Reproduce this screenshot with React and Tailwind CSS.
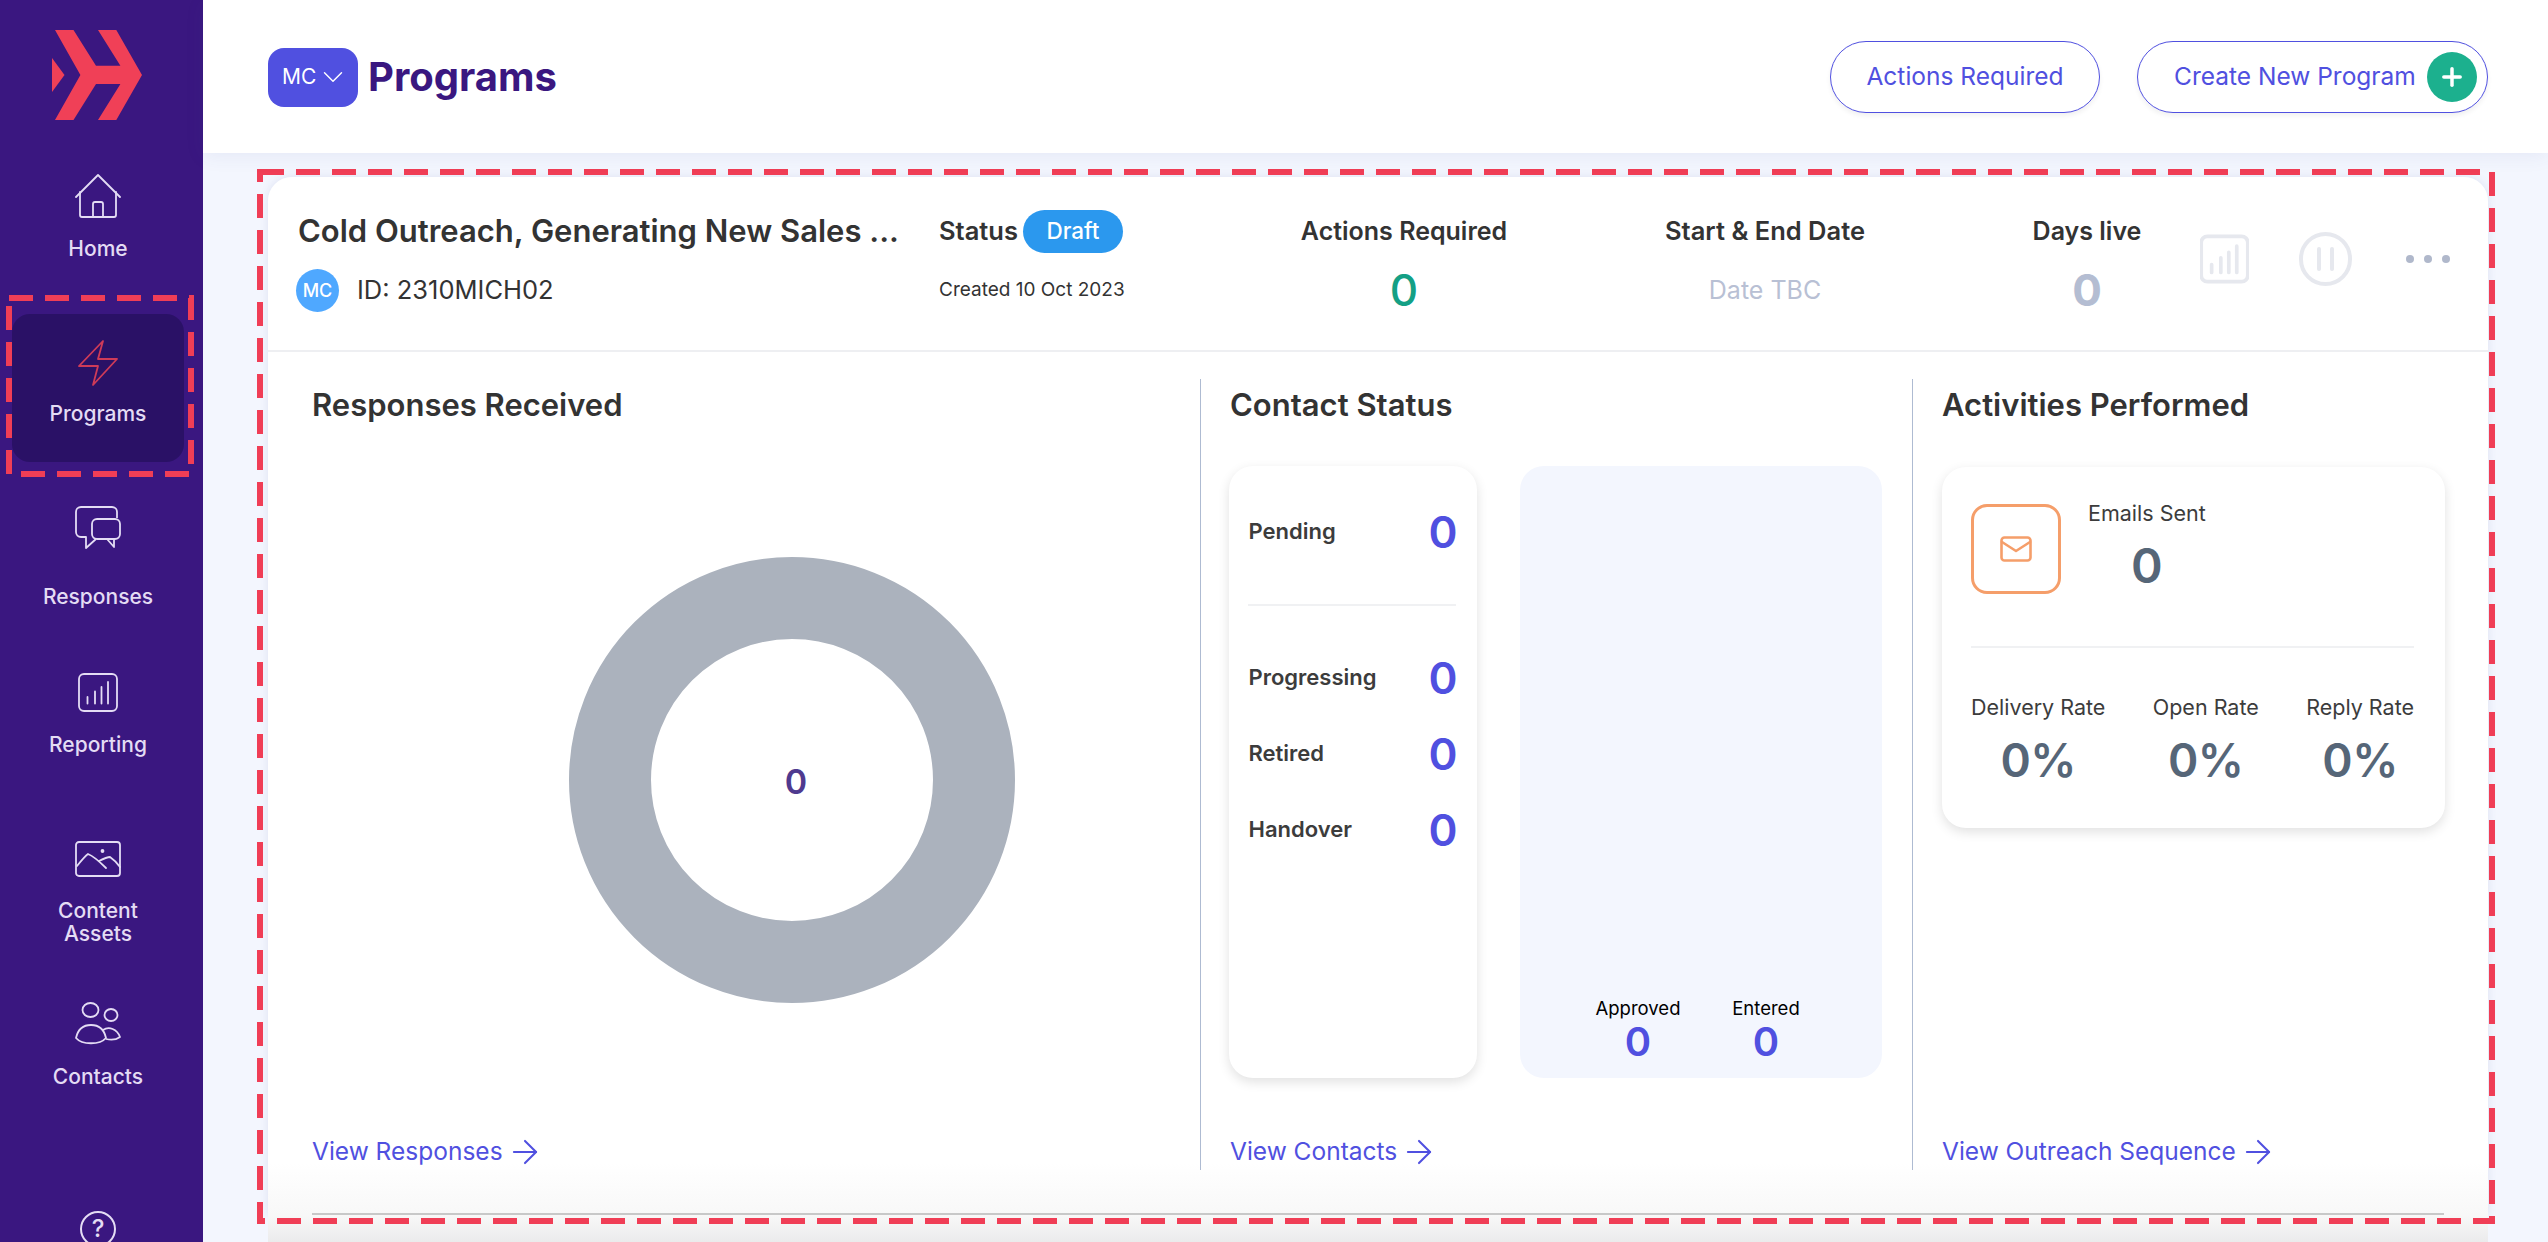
import React from 'react';
import { ArrowRight, ChevronDown, Plus } from 'lucide-react';

const HomeIcon = () => (
  <svg width="46" height="44" viewBox="0 0 46 44" fill="none" stroke="#e4dcf4" strokeWidth="1.8" strokeLinejoin="round" strokeLinecap="round">
    <path d="M1 23 L23 1 L45 23" />
    <path d="M5 18 V41 a2 2 0 0 0 2 2 H39 a2 2 0 0 0 2-2 V18" />
    <path d="M18 43 V30 a2 2 0 0 1 2-2 h6 a2 2 0 0 1 2 2 V43" />
  </svg>
);

const BoltIcon = () => (
  <svg width="40" height="46" viewBox="0 0 40 46" fill="none" stroke="#cf3b58" strokeWidth="1.8" strokeLinejoin="round">
    <path d="M25 1 L1 26 H20 L15 45 L39 19 H20 Z" />
  </svg>
);

const ChatIcon = () => (
  <svg width="46" height="44" viewBox="0 0 46 44" fill="none" stroke="#e4dcf4" strokeWidth="1.8" strokeLinejoin="round">
    <path d="M42 12 V6 a5 5 0 0 0-5-5 H6 a5 5 0 0 0-5 5 V26 a5 5 0 0 0 5 5 H11 V42 L21 33" />
    <rect x="17" y="13" width="28" height="20" rx="5" />
    <path d="M32 33 L39 41 V33" />
  </svg>
);

const ReportIcon = ({ color = '#e4dcf4', sw = 1.8 }) => (
  <svg width="100%" height="100%" viewBox="0 0 40 39" fill="none" stroke={color} strokeWidth={sw} strokeLinecap="round">
    <rect x="1" y="1" width="38" height="37" rx="5" />
    <path d="M9.5 30.5 V24 M17 30.5 V18.5 M23.5 30.5 V14 M30 30.5 V9" />
  </svg>
);

const ImageIcon = () => (
  <svg width="46" height="36" viewBox="0 0 46 36" fill="none" stroke="#e4dcf4" strokeWidth="1.8" strokeLinejoin="round" strokeLinecap="round">
    <rect x="1" y="1" width="44" height="34" rx="3" />
    <path d="M2 25 C6 20 10 15 13 13 C18 15 25 21 31 27" />
    <path d="M24 20 C28 18 32 16 35 16 C38 18 42 22 45 26" />
    <circle cx="27.5" cy="10" r="1" fill="#e4dcf4" />
  </svg>
);

const PeopleIcon = () => (
  <svg width="46" height="43" viewBox="0 0 46 43" fill="none" stroke="#e4dcf4" strokeWidth="1.8" strokeLinejoin="round">
    <ellipse cx="15.5" cy="8" rx="8" ry="7" />
    <ellipse cx="36" cy="13" rx="6.5" ry="6" />
    <path d="M1 36 C3 27 9 23 16 23 C23 23 29 27 31 36 C25 43 7 43 1 36 Z" />
    <path d="M28 28 C34 24 42 27 45 35 C41 38 35 38 31 37" />
  </svg>
);

const MailIcon = () => (
  <svg width="32" height="26" viewBox="0 0 32 26" fill="none" stroke="#f59e6a" strokeWidth="2.6" strokeLinejoin="round" strokeLinecap="round">
    <rect x="1.5" y="1.5" width="29" height="23" rx="3" />
    <path d="M2 6 L16 15 L30 6" />
  </svg>
);

const NavItem = ({ icon, label, className, labelClass }) => (
  <div className={`flex flex-col items-center ${className}`}>
    {icon}
    <span className={`text-center text-[21px] leading-[28px] font-medium text-[#e4dcf4] ${labelClass}`}>{label}</span>
  </div>
);

const Sidebar = () => (
  <aside className="relative flex h-full w-[203px] shrink-0 flex-col items-center overflow-hidden bg-[#3a1780] pr-[7px]">
    <svg className="mt-[30px] ml-[-2px] shrink-0" width="90" height="90" viewBox="0 0 90 90" fill="#f04057">
      <path d="M0 28 L12.5 45 L0 62 Z" />
      <path d="M3 0 H21.5 L44 35.7 H68.4 L46 0 H64.3 L90 45 L64.3 90 H46 L68.4 54 H44 L21.5 90 H3 L28.4 45 Z" />
    </svg>
    <NavItem className="mt-[54px]" labelClass="mt-[17px]" icon={<HomeIcon />} label="Home" />
    <div className="mt-[51px] flex h-[148px] w-[172px] shrink-0 flex-col items-center rounded-[18px] bg-[#2a1166] pt-[26px]">
      <BoltIcon />
      <span className="mt-[14px] text-[21px] leading-[28px] font-medium text-[#e4dcf4]">Programs</span>
    </div>
    <NavItem className="mt-[44px]" labelClass="mt-[33px]" icon={<ChatIcon />} label="Responses" />
    <NavItem
      className="mt-[62px]"
      labelClass="mt-[19px]"
      icon={
        <div className="h-[39px] w-[40px]">
          <ReportIcon />
        </div>
      }
      label="Reporting"
    />
    <NavItem
      className="mt-[82px]"
      labelClass="mt-[22px] !leading-[23px]"
      icon={<ImageIcon />}
      label={
        <>
          Content
          <br />
          Assets
        </>
      }
    />
    <NavItem className="mt-[57px]" labelClass="mt-[18px]" icon={<PeopleIcon />} label="Contacts" />
    <div className="mt-[120px] flex h-[36px] w-[36px] shrink-0 items-center justify-center rounded-full border-2 border-[#e4dcf4] text-[24px] font-medium text-[#e4dcf4]">
      ?
    </div>
  </aside>
);

const Header = () => (
  <header className="relative z-10 flex h-[153px] shrink-0 items-center justify-between bg-white pr-[60px] pl-[65px] shadow-[0_3px_18px_rgba(70,80,150,0.08)]">
    <div className="flex items-center">
      <button className="mt-[1px] flex h-[59px] w-[90px] items-center rounded-[16px] bg-[#5050e0] pl-[14px] text-[21px] font-normal text-white">
        MC
        <ChevronDown className="h-[34px] w-[34px]" strokeWidth={1} />
      </button>
      <h1 className="ml-[10px] text-[40px] leading-none font-bold text-[#3a1780]">Programs</h1>
    </div>
    <div className="flex items-center gap-[37px]">
      <button className="flex h-[72px] w-[270px] items-center justify-center rounded-full border-[1.5px] border-[#5050e0] text-[24.5px] font-normal text-[#5050e0] shadow-[0_3px_5px_rgba(0,0,0,0.06)]">
        Actions Required
      </button>
      <button className="flex h-[72px] w-[351px] items-center justify-between rounded-full border-[1.5px] border-[#5050e0] pr-[10px] pl-[36px] text-[24.5px] font-normal text-[#5050e0] shadow-[0_3px_5px_rgba(0,0,0,0.06)]">
        Create New Program
        <span className="flex h-[50px] w-[50px] items-center justify-center rounded-full bg-[#1cb08e]">
          <Plus className="h-[28px] w-[28px] text-white" strokeWidth={3} />
        </span>
      </button>
    </div>
  </header>
);

const ProgramHeader = () => (
  <div className="flex h-[175px] shrink-0 border-b-2 border-[#eeeff2] pt-[34px] pl-[30px] text-[#333333]">
    <div className="w-[641px] shrink-0">
      <div className="flex h-[40px] items-center text-[31px] font-semibold whitespace-nowrap">Cold Outreach, Generating New Sales ...</div>
      <div className="mt-[17px] flex h-[44px] items-center">
        <span className="-ml-[2px] flex h-[43px] w-[43px] items-center justify-center rounded-full bg-[#4fa8ff] text-[18px] font-medium text-white">
          MC
        </span>
        <span className="ml-[18px] text-[25.5px]">ID: 2310MICH02</span>
      </div>
    </div>
    <div className="w-[185px] shrink-0">
      <div className="flex h-[40px] items-center text-[25.5px] font-semibold">
        Status
        <span className="ml-[5px] flex h-[43px] w-[100px] shrink-0 items-center justify-center rounded-full bg-[#2b98ee] text-[22.5px] font-medium text-white">
          Draft
        </span>
      </div>
      <div className="mt-[17px] flex h-[44px] items-center text-[19px] whitespace-nowrap">Created 10 Oct 2023</div>
    </div>
    <div className="ml-[80px] w-[400px] shrink-0 text-center">
      <div className="h-[40px] text-[25px] leading-[40px] font-semibold">Actions Required</div>
      <div className="mt-[17px] h-[44px] text-[44px] leading-[44px] font-medium text-[#14a085]">0</div>
    </div>
    <div className="ml-[41px] w-[240px] shrink-0 text-center">
      <div className="h-[40px] text-[25.5px] leading-[40px] font-semibold whitespace-nowrap">Start &amp; End Date</div>
      <div className="mt-[17px] h-[44px] text-[25px] leading-[44px] text-[#b8c0d4]">Date TBC</div>
    </div>
    <div className="ml-[102px] w-[200px] shrink-0 text-center">
      <div className="h-[40px] text-[25px] leading-[40px] font-semibold">Days live</div>
      <div className="mt-[17px] h-[44px] text-[44px] leading-[44px] font-bold text-[#b4bdd2]">0</div>
    </div>
    <div className="mt-[23px] ml-[13px] h-[50px] w-[49px] shrink-0">
      <ReportIcon color="#e6e8ee" sw={3} />
    </div>
    <span className="mt-[21px] ml-[50px] flex h-[54px] w-[53px] shrink-0 items-center justify-center gap-[9px] rounded-full border-[4px] border-[#e6e8ee]">
      <span className="h-[24px] w-[4px] rounded-full bg-[#e6e8ee]" />
      <span className="h-[24px] w-[4px] rounded-full bg-[#e6e8ee]" />
    </span>
    <span className="mt-[44px] ml-[54px] flex h-[8px] items-center gap-[10px]">
      <span className="h-[8px] w-[8px] rounded-full bg-[#b0b8cb]" />
      <span className="h-[8px] w-[8px] rounded-full bg-[#b0b8cb]" />
      <span className="h-[8px] w-[8px] rounded-full bg-[#b0b8cb]" />
    </span>
  </div>
);

const SectionTitle = ({ children }) => (
  <h2 className="flex h-[52px] shrink-0 items-center text-[31px] font-semibold whitespace-nowrap text-[#333333]">{children}</h2>
);

const ViewLink = ({ children }) => (
  <a className="mt-auto flex h-[37px] items-center gap-[3px] text-[24.5px] text-[#5050e0]">
    {children}
    <ArrowRight className="h-[38px] w-[38px] shrink-0" strokeWidth={1.3} />
  </a>
);

const StatusRow = ({ label, className }) => (
  <div className={`flex h-[44px] items-center justify-between pr-[19px] pl-[20px] ${className}`}>
    <span className="text-[22px] font-semibold text-[#3c3c3c]">{label}</span>
    <span className="pt-[2px] text-[44px] leading-[44px] font-semibold text-[#5050e0]">0</span>
  </div>
);

const ResponsesCol = () => (
  <section className="flex h-full w-[932px] shrink-0 flex-col pl-[44px]">
    <SectionTitle>Responses Received</SectionTitle>
    <div className="relative mt-[126px] ml-[257px] h-[446px] w-[446px]">
      <svg width="446" height="446" viewBox="0 0 446 446" fill="none">
        <circle cx="223" cy="223" r="182" stroke="#abb2bd" strokeWidth="82" />
      </svg>
      <span className="absolute inset-0 flex items-center justify-center pt-[2px] pl-[8px] text-[34px] font-semibold text-[#4f3a8f]">0</span>
    </div>
    <ViewLink>View Responses</ViewLink>
  </section>
);

const ContactCol = () => (
  <section className="flex h-full w-[712px] shrink-0 flex-col border-l-[1.5px] border-[#aebbd2] pl-[29px]">
    <SectionTitle>Contact Status</SectionTitle>
    <div className="mt-[35px] -ml-[1.5px] flex">
      <div className="h-[612px] w-[248px] shrink-0 rounded-[24px] bg-white pt-[43px] shadow-[0_4px_12px_rgba(0,0,0,0.12)]">
        <StatusRow label="Pending" />
        <div className="mt-[51px] mr-[21px] ml-[19px] border-t-2 border-[#f0f1f3]" />
        <StatusRow label="Progressing" className="mt-[49px]" />
        <StatusRow label="Retired" className="mt-[32px]" />
        <StatusRow label="Handover" className="mt-[32px]" />
      </div>
      <div className="ml-[43px] flex h-[612px] w-[362px] shrink-0 items-end justify-center rounded-[24px] bg-[#f3f6fe] pb-[14px] pl-[3px]">
        <div className="w-[128px] text-center">
          <div className="text-[18.5px] leading-[24px] text-black">Approved</div>
          <div className="text-[40px] leading-[44px] font-semibold text-[#5050e0]">0</div>
        </div>
        <div className="w-[128px] text-center">
          <div className="text-[18.5px] leading-[24px] text-black">Entered</div>
          <div className="text-[40px] leading-[44px] font-semibold text-[#5050e0]">0</div>
        </div>
      </div>
    </div>
    <ViewLink>View Contacts</ViewLink>
  </section>
);

const RateStat = ({ label }) => (
  <div className="flex flex-col items-center">
    <span className="text-[21.5px] leading-[28px] text-[#3c3c3c]">{label}</span>
    <span className="mt-[11px] text-[46px] leading-[56px] font-semibold tracking-[-0.5px] text-[#566678]">0%</span>
  </div>
);

const ActivitiesCol = () => (
  <section className="flex h-full flex-1 flex-col border-l-[1.5px] border-[#aebbd2] pl-[29px]">
    <SectionTitle>Activities Performed</SectionTitle>
    <div className="mt-[36px] h-[361px] w-[503px] shrink-0 rounded-[24px] bg-white pt-[37px] shadow-[0_4px_12px_rgba(0,0,0,0.12)]">
      <div className="ml-[29px] flex">
        <div className="flex h-[90px] w-[90px] shrink-0 items-center justify-center rounded-[16px] border-[3px] border-[#f59e6a]">
          <MailIcon />
        </div>
        <div className="-mt-[5px] ml-[27px] flex flex-col items-center">
          <span className="text-[21.5px] leading-[28px] whitespace-nowrap text-[#3c3c3c]">Emails Sent</span>
          <span className="mt-[11px] text-[48px] leading-[56px] font-semibold text-[#566678]">0</span>
        </div>
      </div>
      <div className="mt-[52px] mr-[31px] ml-[29px] border-t-2 border-[#f0f1f3]" />
      <div className="mt-[45px] mr-[31px] ml-[29px] flex justify-between">
        <RateStat label="Delivery Rate" />
        <RateStat label="Open Rate" />
        <RateStat label="Reply Rate" />
      </div>
    </div>
    <ViewLink>View Outreach Sequence</ViewLink>
  </section>
);

export default function App() {
  return (
    <div className="relative flex h-[1242px] w-[2548px] overflow-hidden bg-[#f3f6fe] font-[family-name:Inter,sans-serif]">
      <Sidebar />
      <main className="flex min-w-0 flex-1 flex-col">
        <Header />
        <div className="flex-1 pt-[24px] pr-[60px] pl-[65px]">
          <div className="flex h-[1038px] w-[2220px] flex-col rounded-t-[24px] bg-gradient-to-b from-white from-95% to-[#f8f8f8] shadow-[0_0_10px_rgba(70,80,150,0.12)]">
            <ProgramHeader />
            <div className="flex h-[818px] shrink-0 pt-[27px]">
              <ResponsesCol />
              <ContactCol />
              <ActivitiesCol />
            </div>
            <div className="mx-[44px] mt-[43px] border-b-2 border-[#c8c8c8]" />
          </div>
          <div className="h-[27px] w-[2220px] bg-gradient-to-b from-[#f8f8f8] to-[#ebebec]" />
        </div>
      </main>
      {/* red dashed annotation boxes */}
      <svg className="pointer-events-none absolute top-0 left-0" width="2548" height="1242" fill="none" stroke="#f03e56" strokeWidth="6" strokeDasharray="24 12">
        <rect x="9" y="298" width="182" height="176" />
        <rect x="260" y="172" width="2232" height="1049" />
      </svg>
    </div>
  );
}
